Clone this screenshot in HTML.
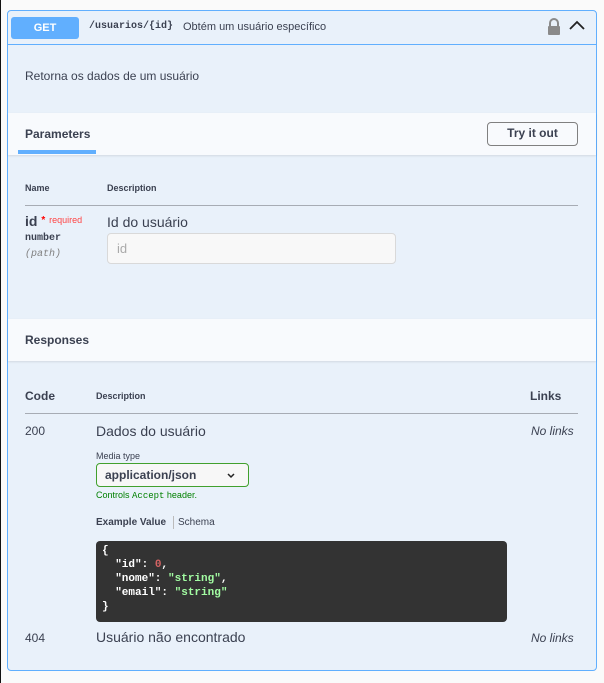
<!DOCTYPE html>
<html><head><meta charset="utf-8"><style>
*{margin:0;padding:0;box-sizing:border-box}
body{width:604px;height:683px;background:#fafafa;font-family:"Liberation Sans",sans-serif;color:#3b4151;position:relative;overflow:hidden}
.a{position:absolute}
.mono{font-family:"Liberation Mono",monospace}
</style></head><body>
<div class="a" style="left:0;top:0;width:1px;height:683px;background:#111"></div>
<div class="a" style="left:7px;top:10px;width:590px;height:661px;border:1px solid #61affe;border-radius:4px;background:#e9f1fa"></div>
<div class="a" style="left:8px;top:44px;width:588px;height:1px;background:#61affe"></div>
<div class="a" style="left:11px;top:17px;width:68px;height:22px;background:#61affe;border-radius:3px;color:#fff;font-weight:bold;font-size:11px;text-align:center;line-height:22px">GET</div>
<div class="a mono" style="left:89px;top:21px;font-size:10px;font-weight:bold">/usuarios/{id}</div>
<div class="a" style="left:183px;top:21px;font-size:11px">Obtém um usuário específico</div>
<svg class="a" style="left:547px;top:18px" width="14" height="18" viewBox="0 0 14 18"><path d="M3 8V5a4 4 0 0 1 8 0V8" fill="none" stroke="#8a8a8a" stroke-width="2"/><rect x="1" y="8" width="12" height="9" rx="1" fill="#8a8a8a"/></svg>
<svg class="a" style="left:569px;top:20px" width="16" height="10" viewBox="0 0 16 10"><path d="M1 9L8 2l7 7" fill="none" stroke="#222" stroke-width="1.8"/></svg>
<div class="a" style="left:25px;top:69px;font-size:12px">Retorna os dados de um usuário</div>
<div class="a" style="left:8px;top:113px;width:588px;height:42px;background:#f8fafd;box-shadow:0 1px 2px rgba(0,0,0,.1)"></div>
<div class="a" style="left:25px;top:127px;font-size:12px;font-weight:bold">Parameters</div>
<div class="a" style="left:18px;top:150px;width:78px;height:4px;background:#61affe"></div>
<div class="a" style="left:487px;top:122px;width:91px;height:24px;border:1.5px solid #808080;border-radius:4px;font-size:12px;font-weight:bold;text-align:center;line-height:21px">Try it out</div>
<div class="a" style="left:25px;top:183px;font-size:9px;font-weight:bold">Name</div>
<div class="a" style="left:107px;top:183px;font-size:9px;font-weight:bold">Description</div>
<div class="a" style="left:25px;top:205px;width:553px;height:1px;background:#a7acb4"></div>
<div class="a" style="left:25px;top:213px;font-size:14px;font-weight:bold">id <span style="color:red;font-size:10px;vertical-align:3px">*</span> <span style="color:#f44;font-size:9px;font-weight:normal;vertical-align:3px">required</span></div>
<div class="a mono" style="left:25px;top:233px;font-size:10px;font-weight:bold">number</div>
<div class="a mono" style="left:25px;top:249px;font-size:10px;font-style:italic;color:#808080">(path)</div>
<div class="a" style="left:107px;top:214px;font-size:14px">Id do usuário</div>
<div class="a" style="left:107px;top:233px;width:289px;height:31px;border:1px solid #d9d9d9;border-radius:4px;background:#f8f8f8;font-size:13px;color:#aaa;padding:7px 9px">id</div>
<div class="a" style="left:8px;top:319px;width:588px;height:42px;background:#f8fafd;box-shadow:0 1px 2px rgba(0,0,0,.1)"></div>
<div class="a" style="left:25px;top:333px;font-size:12px;font-weight:bold">Responses</div>
<div class="a" style="left:25px;top:389px;font-size:12px;font-weight:bold">Code</div>
<div class="a" style="left:96px;top:391px;font-size:9px;font-weight:bold">Description</div>
<div class="a" style="left:530px;top:389px;font-size:12px;font-weight:bold">Links</div>
<div class="a" style="left:25px;top:413px;width:553px;height:1px;background:#a7acb4"></div>
<div class="a" style="left:25px;top:424px;font-size:12px">200</div>
<div class="a" style="left:96px;top:423px;font-size:14px">Dados do usuário</div>
<div class="a" style="left:531px;top:424px;font-size:12px;font-style:italic">No links</div>
<div class="a" style="left:96px;top:451px;font-size:9px">Media type</div>
<div class="a" style="left:96px;top:463px;width:153px;height:24px;border:1.5px solid #41a02d;border-radius:4px;background:#f7f7f7;font-size:12px;font-weight:bold;padding:4px 8px">application/json</div>
<svg class="a" style="left:226px;top:472px" width="10" height="7" viewBox="0 0 10 7"><path d="M2 2l3 3 3-3" fill="none" stroke="#222" stroke-width="1.5"/></svg>
<div class="a" style="left:96px;top:490px;font-size:9px;color:#008000">Controls <span class="mono">Accept</span> header.</div>
<div class="a" style="left:96px;top:517px;font-size:10px;font-weight:bold">Example Value</div>
<div class="a" style="left:173px;top:516px;width:1px;height:13px;background:#bbb"></div>
<div class="a" style="left:178px;top:517px;font-size:10px">Schema</div>
<div class="a mono" style="left:96px;top:541px;width:411px;height:81px;background:#333;border-radius:4px;color:#fff;font-size:11px;font-weight:bold;line-height:14px;padding:3px 6px;white-space:pre">{
  "id": <span style="color:#d36363">0</span>,
  "nome": <span style="color:#a2fca2">"string"</span>,
  "email": <span style="color:#a2fca2">"string"</span>
}</div>
<div class="a" style="left:25px;top:631px;font-size:12px">404</div>
<div class="a" style="left:96px;top:629px;font-size:14px">Usuário não encontrado</div>
<div class="a" style="left:531px;top:631px;font-size:12px;font-style:italic">No links</div>
</body></html>
